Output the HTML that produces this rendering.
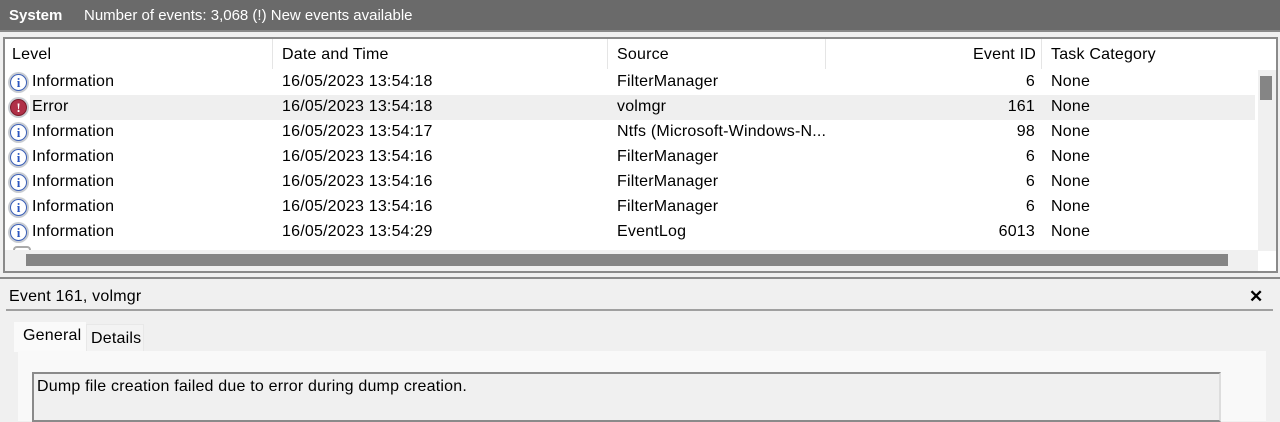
<!DOCTYPE html>
<html><head><style>
*{margin:0;padding:0;box-sizing:border-box}
body{width:1280px;height:419px;overflow:hidden;background:#f0f0f0;font-family:"Liberation Sans",sans-serif;font-size:16px;letter-spacing:0.2px;color:#000;position:relative}
.a{position:absolute}
.top{left:0;top:0;width:1280px;height:32px;background:#6a6a6a;border-bottom:2px solid #888;font-size:15px;letter-spacing:0}
.top span{position:absolute;top:7px;color:#fff}
.list{left:3px;top:37px;width:1275px;height:236px;border:2px solid #8a8a8a;background:#fff}
.row{position:absolute;left:3px;width:1250px;height:25px}
.c{position:absolute;top:4px;white-space:nowrap}
.hd{position:absolute;top:0;height:30px;border-right:1px solid #e5e5e5}
</style></head><body>
<div class="a top"><span style="left:9px;font-weight:bold">System</span><span style="left:84px">Number of events: 3,068 (!) New events available</span></div>
<div class="a list">
 <div class="hd" style="left:0;width:268px"></div><div class="hd" style="left:268px;width:335px"></div><div class="hd" style="left:603px;width:218px"></div><div class="hd" style="left:821px;width:216px"></div>
 <span class="c" style="left:7px;top:7px">Level</span><span class="c" style="left:277px;top:7px">Date and Time</span><span class="c" style="left:612px;top:7px">Source</span><span class="c" style="left:1031px;top:7px;transform:translateX(-100%)">Event ID</span><span class="c" style="left:1046px;top:7px">Task Category</span>
 <div class="a" style="left:1253px;top:31px;width:18px;height:181px;background:#f0f0f0"><div class="a" style="left:2px;top:6px;width:12px;height:24px;background:#858585"></div></div>
 <div class="a" style="left:0;top:211px;width:1253px;height:21px;background:#f0f0f0"><div class="a" style="left:21px;top:4px;width:1202px;height:12px;background:#858585"></div></div>
 <div class="a" style="left:8px;top:207px;width:18px;height:4px;border:2px solid #aaa;border-bottom:none;border-radius:9px 9px 0 0"></div>
</div>
<div id="rows"></div>
<div class="a" style="left:0;top:277px;width:1280px;height:4px;border-top:2px solid #8a8a8a"></div>
<span class="a" style="left:9px;top:288px">Event 161, volmgr</span>
<span class="a" style="left:1249px;top:287px;font-weight:bold;font-size:17px">✕</span>
<div class="a" style="left:6px;top:309px;width:1267px;height:2px;background:#a0a0a0"></div>
<div class="a" style="left:14px;top:322px;width:72px;height:30px;background:#fafafa"></div>
<span class="a" style="left:23px;top:327px">General</span>
<div class="a" style="left:86px;top:324px;width:58px;height:28px;background:#f3f3f3;border:1px solid #e8e8e8"></div>
<span class="a" style="left:91px;top:330px">Details</span>
<div class="a" style="left:18px;top:351px;width:1248px;height:70px;background:#f9f9f9"></div>
<div class="a" style="left:32px;top:372px;width:1189px;height:50px;border:2px solid #8a8a8a;border-right-color:#ddd;background:#f0f0f0"></div>
<span class="a" style="left:37px;top:378px">Dump file creation failed due to error during dump creation.</span>
<script>
var d=[["Information","16/05/2023 13:54:18","FilterManager","6"],["Error","16/05/2023 13:54:18","volmgr","161"],["Information","16/05/2023 13:54:17","Ntfs (Microsoft-Windows-N...","98"],["Information","16/05/2023 13:54:16","FilterManager","6"],["Information","16/05/2023 13:54:16","FilterManager","6"],["Information","16/05/2023 13:54:16","FilterManager","6"],["Information","16/05/2023 13:54:29","EventLog","6013"]];
var h="";d.forEach(function(r,i){var t=70+i*25,e=r[0]=="Error";
h+='<div class="row" style="left:5px;top:'+t+'px;'+(e?'background:#efefef;left:30px;width:1225px':'')+'"></div>';
h+='<div class="a" style="left:8px;top:'+(t+2)+'px;width:21px;height:21px;border-radius:50%;background:#c8ccd2;"><div class="a" style="left:2px;top:2px;width:17px;height:17px;border-radius:50%;background:'+(e?'#b03048':'#fff')+';border:1px solid '+(e?'#7a1a2a':'#3a5fb8')+';color:'+(e?'#fff':'#2a55c0')+';font-weight:bold;font-size:13px;text-align:center;line-height:15px;letter-spacing:0;font-family:Liberation Serif,serif">'+(e?'!':'i')+'</div></div>';
h+='<span class="a" style="left:32px;top:'+(t+3)+'px">'+r[0]+'</span><span class="a" style="left:282px;top:'+(t+3)+'px">'+r[1]+'</span><span class="a" style="left:617px;top:'+(t+3)+'px">'+r[2]+'</span><span class="a" style="left:935px;width:100px;text-align:right;top:'+(t+3)+'px">'+r[3]+'</span><span class="a" style="left:1051px;top:'+(t+3)+'px">None</span>';});
document.getElementById("rows").innerHTML=h;
</script>
</body></html>
